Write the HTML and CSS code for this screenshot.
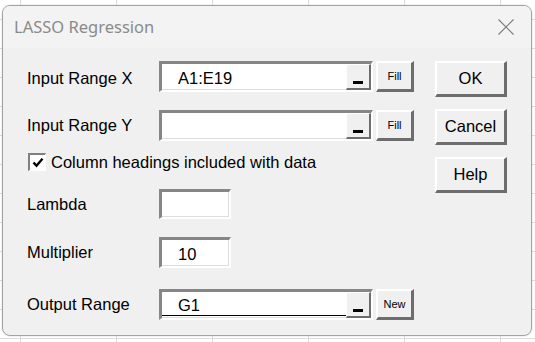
FILE: index.html
```html
<!DOCTYPE html>
<html>
<head>
<meta charset="utf-8">
<title>LASSO Regression</title>
<link rel="stylesheet" href="styles.css">
</head>
<body>
<div class="page">
  <div class="dialog">
    <div class="titlebar">
      <span class="title">LASSO Regression</span>
      <svg class="close" width="16" height="16" viewBox="0 0 16 16"><path d="M0.5 0.5L15.5 15.5M15.5 0.5L0.5 15.5" stroke="#7c7c7c" stroke-width="1.1" fill="none"/></svg>
    </div>
    <div class="content">
      <div class="form">
        <div class="row r1">
          <span class="label low">Input Range X</span>
          <div class="field wide"><span class="value">A1:E19</span><span class="dots"><i></i></span></div>
          <span class="btn small">Fill</span>
        </div>
        <div class="row r2">
          <span class="label">Input Range Y</span>
          <div class="field wide"><span class="value"></span><span class="dots"><i></i></span></div>
          <span class="btn small">Fill</span>
        </div>
        <div class="row r3">
          <span class="check"><svg width="14" height="14" viewBox="0 0 14 14"><path d="M2.5 6.5L5.5 9.8L11.5 2.8" stroke="#000" stroke-width="2.4" fill="none"/></svg></span>
          <span class="check-text">Column headings included with data</span>
        </div>
        <div class="row r4">
          <span class="label">Lambda</span>
          <div class="field short"><span class="value"></span></div>
        </div>
        <div class="row r5">
          <span class="label">Multiplier</span>
          <div class="field short"><span class="value">10</span></div>
        </div>
        <div class="row r6">
          <span class="label">Output Range</span>
          <div class="field wide"><span class="value underline">G1</span><span class="dots"><i></i></span></div>
          <span class="btn small">New</span>
        </div>
      </div>
      <div class="buttons">
        <span class="btn big">OK</span>
        <span class="btn big">Cancel</span>
        <span class="btn big">Help</span>
      </div>
    </div>
  </div>
</div>
</body>
</html>
```
FILE: styles.css
```css
* { box-sizing: border-box; }
html, body { margin: 0; height: 100%; }
body {
  background-color: #fff;
  background-image:
    linear-gradient(to right, #dcdcdc 1px, transparent 1px),
    linear-gradient(to bottom, #dcdcdc 1px, transparent 1px);
  background-size: 96px 100%, 100% 29px;
  background-position: 20px 0, 0 19px;
  font-family: "Liberation Sans", Arial, sans-serif;
  color: #000;
  overflow: hidden;
}
.page { padding: 5px 0 0 2px; }
.dialog {
  width: 530px;
  height: 331px;
  border: 1px solid #a3a3a3;
  border-radius: 8px;
  background: #f0f0f0;
  overflow: hidden;
  box-shadow: 0 0 0 1px rgba(0, 0, 0, 0.05);
}
.titlebar {
  height: 42px;
  background: #f3f3f3;
  display: flex;
  align-items: center;
  justify-content: space-between;
  padding: 0 17px 0 11px;
}
.title {
  font-family: "Noto Sans", sans-serif;
  font-size: 16.5px;
  color: #8a8a8a;
  padding-bottom: 2px;
}
.close { display: block; }
.content {
  display: flex;
  padding: 13px 0 0 24px;
}
.form { width: 408px; }
.row { display: flex; align-items: center; }
.r1 { height: 31px; }
.r2 { height: 31px; margin-top: 18px; }
.r3 { height: 18px; margin-top: 12px; }
.r4 { height: 30px; margin-top: 18px; }
.r5 { height: 31px; margin-top: 18px; }
.r6 { height: 31px; margin-top: 21px; }
.label {
  width: 132px;
  font-size: 16.5px;
  line-height: 19px;
}
.label.low { margin-top: 4px; }
.field {
  display: flex;
  height: 100%;
  background: #fff;
  border-style: solid;
  border-width: 3px 2px 2px 3px;
  border-color: #868686 #fff #fff #868686;
  box-shadow: inset -1px -1px 0 #dedede;
}
.field.wide { width: 214px; }
.field.short { width: 72px; }
.value {
  flex: 1;
  display: flex;
  align-items: center;
  padding: 3px 0 0 16px;
  font-size: 16.5px;
  line-height: 19px;
}
.value.underline {
  border-bottom: 1px solid #000;
  margin-bottom: 2px;
}
.dots {
  width: 25px;
  height: 100%;
  background: #f0f0f0;
  border-style: solid;
  border-width: 1px 2px 2px 1px;
  border-color: #fff #6d6d6d #6d6d6d #fff;
  display: flex;
  align-items: flex-end;
  justify-content: center;
  padding-bottom: 4px;
}
.dots i { display: block; width: 10px; height: 3px; background: #000; }
.btn {
  display: flex;
  align-items: center;
  justify-content: center;
  background: #f0f0f0;
  border-style: solid;
  border-width: 2px 3px 3px 2px;
  border-color: #fff #6d6d6d #6d6d6d #fff;
}
.btn.small {
  width: 38px;
  height: 31px;
  margin-left: 3px;
  font-size: 11px;
}
.buttons {
  display: flex;
  flex-direction: column;
  gap: 12px;
}
.btn.big {
  width: 72px;
  height: 36px;
  font-size: 16.5px;
}
.check {
  width: 18px;
  height: 18px;
  margin-left: 1px;
  background: #fff;
  border-style: solid;
  border-width: 2px 1px 1px 2px;
  border-color: #808080 #fff #fff #808080;
  display: flex;
  align-items: center;
  justify-content: center;
}
.check svg { display: block; }
.check-text {
  margin-left: 5px;
  font-size: 16.5px;
  line-height: 19px;
}
```
